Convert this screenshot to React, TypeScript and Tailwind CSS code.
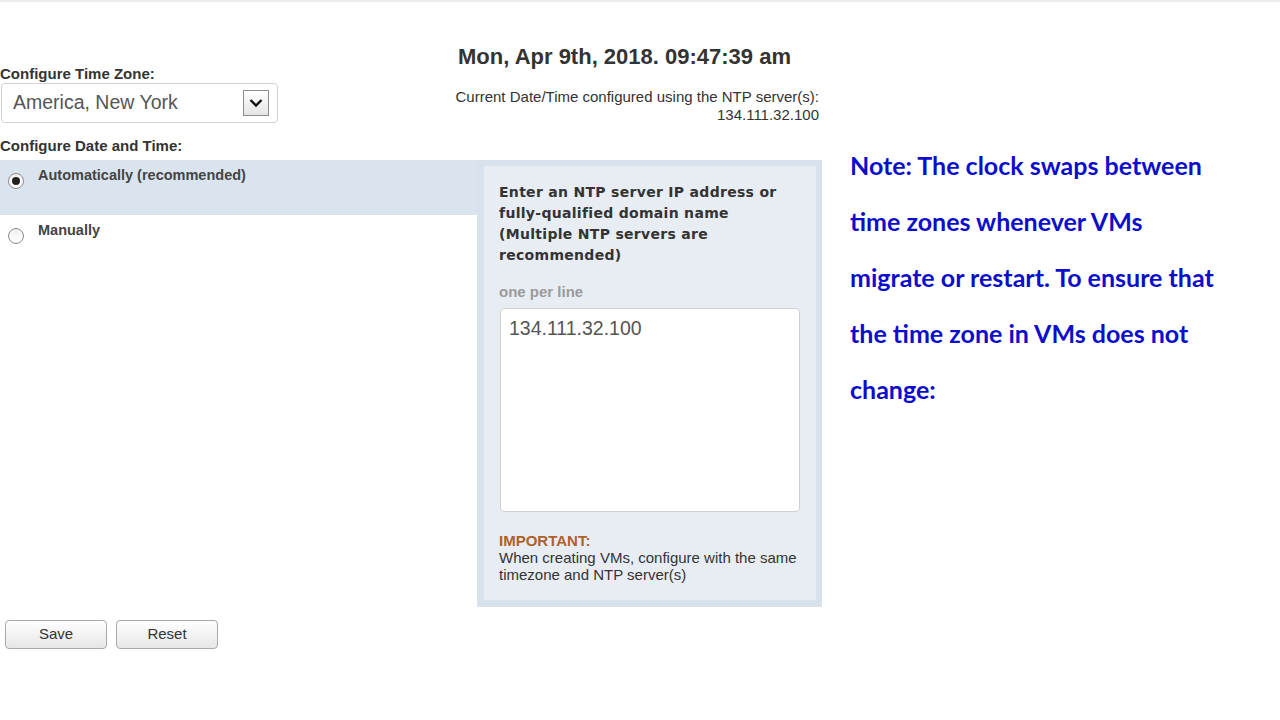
import React from "react"

function Radio({ checked }: { checked?: boolean }) {
  return (
    <span className="mt-[7px] flex h-[16px] w-[16px] shrink-0 items-center justify-center rounded-full border border-[#8a8a8a] bg-gradient-to-b from-[#f0f0f0] to-white">
      {checked && <span className="h-[8px] w-[8px] rounded-full bg-[#222]" />}
    </span>
  )
}

export default function App() {
  const notes = [
    "Note: The clock swaps between",
    "time zones whenever VMs",
    "migrate or restart. To ensure that",
    "the time zone in VMs does not",
    "change:",
  ]

  return (
    <div className="h-[720px] w-[1280px] overflow-hidden border-t-2 border-[#ececec] bg-white font-['Liberation_Sans',Arial,sans-serif] text-[#333]">
      <div className="flex">
        <div className="w-[822px] shrink-0">
          <div className="flex h-[158px]">
            <div className="w-[420px] shrink-0 pt-[63px]">
              <div className="text-[15px] font-bold leading-[17px] text-[#333]">Configure Time Zone:</div>
              <div className="ml-[1px] mt-[1px] flex h-[40px] w-[277px] items-center justify-between rounded-[4px] border border-[#d2d2d2] bg-white pl-[11px] pr-[8px]">
                <span className="text-[19.5px] leading-none text-[#555]">America, New York</span>
                <span className="flex h-[26px] w-[26px] items-center justify-center border border-[#8d8d8d] bg-gradient-to-b from-white to-[#e4e4e4]">
                  <svg width="14" height="10" viewBox="0 0 14 10">
                    <path d="M1.5 2 L7 7.5 L12.5 2" fill="none" stroke="#111" strokeWidth="2.4" />
                  </svg>
                </span>
              </div>
              <div className="mt-[14px] text-[15px] font-bold leading-[17px] text-[#333]">Configure Date and Time:</div>
            </div>
            <div className="flex-1 pt-[42px] text-right">
              <div className="mr-[31px] whitespace-nowrap text-[22px] font-bold leading-[26px] text-[#333]">
                Mon, Apr 9th, 2018. 09:47:39 am
              </div>
              <div className="mr-[3px] mt-[18px] whitespace-nowrap text-[15px] leading-[18px] text-[#333]">
                Current Date/Time configured using the NTP server(s):
                <br />
                134.111.32.100
              </div>
            </div>
          </div>

          <div className="flex">
            <div className="w-[477px] shrink-0">
              <div className="flex h-[55px] gap-[14px] bg-[#d9e4ef] pl-[8px] pt-[6px]">
                <Radio checked />
                <span className="text-[14.5px] font-bold leading-[18px] text-[#444]">Automatically (recommended)</span>
              </div>
              <div className="flex gap-[14px] pl-[8px] pt-[6px]">
                <Radio />
                <span className="text-[14.5px] font-bold leading-[18px] text-[#444]">Manually</span>
              </div>
            </div>
            <div className="h-[447px] w-[345px] bg-[#d8e2ec] pb-[7px] pl-[7px] pr-[6px] pt-[6px]">
              <div className="h-full bg-[#e8edf4] pl-[15px] pr-[16px] pt-[16px]">
                <div className="w-[290px] font-['DejaVu_Sans',Verdana,sans-serif] text-[14px] font-bold leading-[21px] tracking-[0.3px] text-[#333]">
                  Enter an NTP server IP address or fully-qualified domain name (Multiple NTP servers are recommended)
                </div>
                <div className="mt-[17px] text-[15px] font-bold leading-[17px] text-[#9a9a9a]">one per line</div>
                <div className="ml-[1px] mt-[8px] h-[204px] w-[300px] rounded-[4px] border border-[#cfcfcf] bg-white px-[8px] pt-[8px] text-[19.5px] leading-[22px] text-[#555]">
                  134.111.32.100
                </div>
                <div className="mt-[20px] text-[15px] font-bold leading-[17px] text-[#b0602a]">IMPORTANT:</div>
                <div className="text-[15px] leading-[17px] text-[#333]">
                  When creating VMs, configure with the same timezone and NTP server(s)
                </div>
              </div>
            </div>
          </div>

          <div className="mt-[13px] flex gap-[9px] pl-[5px]">
            <button className="h-[29px] w-[102px] rounded-[4px] border border-[#a9a9a9] bg-gradient-to-b from-white to-[#e6e6e6] text-[15px] text-[#333]">
              Save
            </button>
            <button className="h-[29px] w-[102px] rounded-[4px] border border-[#a9a9a9] bg-gradient-to-b from-white to-[#e6e6e6] text-[15px] text-[#333]">
              Reset
            </button>
          </div>
        </div>

        <div className="pl-[28px] pt-[135px] font-['Lato',sans-serif] text-[25px] font-bold leading-[56px] text-[#0d0dcc]">
          {notes.map((line) => (
            <div key={line} className="whitespace-nowrap">
              {line}
            </div>
          ))}
        </div>
      </div>
    </div>
  )
}
